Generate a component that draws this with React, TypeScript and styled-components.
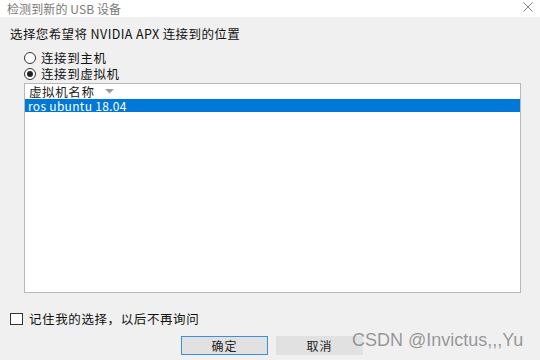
import React from "react";
import styled, { createGlobalStyle } from "styled-components";

const Global = createGlobalStyle`
  html, body { margin: 0; padding: 0; background: #f0f0f0; }
  body { font-family: "Noto Sans CJK SC", "Noto Sans", sans-serif; }
`;

const Window = styled.div`
  position: relative;
  width: 540px;
  height: 360px;
  background: #f0f0f0;
  display: flex;
  flex-direction: column;
  overflow: hidden;
  color: #111;
`;

const TitleBar = styled.div`
  height: 17px;
  background: #ffffff;
  display: flex;
  align-items: center;
  justify-content: space-between;
  padding: 0 7px 0 7px;
  flex-shrink: 0;
`;

const TitleText = styled.span`
  font-size: 12px;
  color: #7a7a7a;
  line-height: 17px;
  letter-spacing: 0.1px;
`;

const CloseBtn = styled.span`
  width: 10px;
  height: 10px;
  display: flex;
  margin-top: -3px;
`;

const Body = styled.div`
  display: flex;
  flex-direction: column;
  padding: 0 19px 0 10px;
  flex: 1;
`;

const Instruction = styled.div`
  font-size: 12.5px;
  line-height: 14px;
  margin-top: 10px;
  letter-spacing: 0.4px;
`;

const RadioGroup = styled.div`
  display: flex;
  flex-direction: column;
  gap: 2px;
  margin-top: 10px;
  padding-left: 14px;
`;

const RadioRow = styled.div`
  display: flex;
  align-items: center;
  height: 14px;
  line-height: 14px;
  font-size: 12.5px;
  letter-spacing: 0.6px;
`;

const RadioCircle = styled.span<{ $checked?: boolean }>`
  width: 10px;
  height: 10px;
  border: 1px solid #333;
  border-radius: 50%;
  background: #fff;
  display: flex;
  align-items: center;
  justify-content: center;
  margin-right: 5px;
  flex-shrink: 0;
  &::after {
    content: "";
    display: ${(p) => (p.$checked ? "block" : "none")};
    width: 6px;
    height: 6px;
    border-radius: 50%;
    background: #222;
  }
`;

const ListBox = styled.div`
  margin-top: 2px;
  margin-left: 14px;
  height: 210px;
  background: #ffffff;
  border: 1px solid #b8b8b8;
  display: flex;
  flex-direction: column;
  box-sizing: border-box;
`;

const HeaderRow = styled.div`
  height: 15px;
  line-height: 15px;
  display: flex;
  align-items: center;
  padding-left: 4px;
  font-size: 12.5px;
  letter-spacing: 0.6px;
  color: #222;
`;

const SortArrow = styled.span`
  margin-left: 10px;
  display: flex;
`;

const ItemRow = styled.div<{ $selected?: boolean }>`
  height: 13px;
  line-height: 13px;
  display: flex;
  align-items: center;
  padding-left: 3px;
  font-size: 12px;
  letter-spacing: 0.3px;
  background: ${(p) => (p.$selected ? "#0078d7" : "transparent")};
  color: ${(p) => (p.$selected ? "#ffffff" : "#111")};
`;

const CheckRow = styled.div`
  display: flex;
  align-items: center;
  margin-top: 19px;
  font-size: 12.5px;
  line-height: 14px;
  letter-spacing: 0.6px;
  height: 14px;
`;

const CheckBox = styled.span`
  width: 11px;
  height: 10px;
  border: 1px solid #333;
  background: #fff;
  margin-right: 6px;
  flex-shrink: 0;
`;

const ButtonRow = styled.div`
  display: flex;
  gap: 8px;
  margin-top: 10px;
  padding-left: 171px;
`;

const Button = styled.div<{ $default?: boolean }>`
  width: 87px;
  height: 19px;
  box-sizing: border-box;
  background: #e1e1e1;
  border: 1px solid ${(p) => (p.$default ? "#3c8fdc" : "#e1e1e1")};
  display: flex;
  align-items: center;
  justify-content: center;
  font-size: 12px;
  letter-spacing: 1px;
  color: #222;
`;

const Watermark = styled.div`
  position: absolute;
  left: 352px;
  top: 330px;
  font-family: "Liberation Sans", Arial, sans-serif;
  font-size: 18px;
  color: rgba(120, 120, 120, 0.75);
  white-space: nowrap;
`;

export default function App() {
  return (
    <>
      <Global />
      <Window>
        <TitleBar>
          <TitleText>检测到新的 USB 设备</TitleText>
          <CloseBtn>
            <svg width="10" height="10" viewBox="0 0 10 10">
              <path d="M0.5 0.5 L9.5 9.5 M9.5 0.5 L0.5 9.5" stroke="#888" strokeWidth="1" />
            </svg>
          </CloseBtn>
        </TitleBar>
        <Body>
          <Instruction>选择您希望将 NVIDIA APX 连接到的位置</Instruction>
          <RadioGroup>
            <RadioRow>
              <RadioCircle />
              连接到主机
            </RadioRow>
            <RadioRow>
              <RadioCircle $checked />
              连接到虚拟机
            </RadioRow>
          </RadioGroup>
          <ListBox>
            <HeaderRow>
              虚拟机名称
              <SortArrow>
                <svg width="9" height="5" viewBox="0 0 9 5">
                  <path d="M0 0 L9 0 L4.5 4.5 Z" fill="#9a9a9a" />
                </svg>
              </SortArrow>
            </HeaderRow>
            <ItemRow $selected>ros ubuntu 18.04</ItemRow>
          </ListBox>
          <CheckRow>
            <CheckBox />
            记住我的选择，以后不再询问
          </CheckRow>
          <ButtonRow>
            <Button $default>确定</Button>
            <Button>取消</Button>
          </ButtonRow>
        </Body>
        <Watermark>CSDN @Invictus,,,Yu</Watermark>
      </Window>
    </>
  );
}
